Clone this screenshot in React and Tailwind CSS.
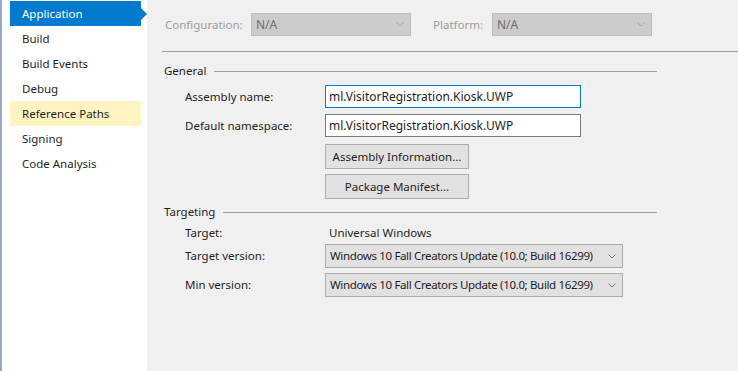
import React from 'react';

const font = { fontFamily: '"Noto Sans", "Open Sans", sans-serif' };

const navItems = ['Application', 'Build', 'Build Events', 'Debug', 'Reference Paths', 'Signing', 'Code Analysis'];

function Chevron({ color = '#8a8a8a' }) {
  return (
    <svg width="8" height="5" viewBox="0 0 8 5" className="shrink-0">
      <polyline points="0.5,0.5 4,4 7.5,0.5" fill="none" stroke={color} strokeWidth="1" />
    </svg>
  );
}

function Combo({ value, disabled, className }) {
  return (
    <div
      className={`flex items-center justify-between pl-[4px] pr-[6px] border whitespace-nowrap ${
        disabled ? 'bg-[#cccccc] border-[#bfbfbf] text-[#6d6d6d] text-[12px]' : 'bg-[#e1e1e1] border-[#adadad] text-[#1e1e1e]'
      } ${className}`}
    >
      <span className={disabled ? '' : 'tracking-[-0.35px]'}>{value}</span>
      <Chevron color={disabled ? '#a8a8a8' : '#7a7a7a'} />
    </div>
  );
}

function Section({ title, className }) {
  return (
    <div className={`flex items-center h-[14px] pl-[17px] pr-[81px] ${className}`}>
      <span className="text-[#1e1e1e]">{title}</span>
      <div className="flex-1 h-px bg-[#a0a0a0] ml-[8px]" />
    </div>
  );
}

export default function App() {
  return (
    <div className="flex w-[738px] h-[371px] text-[11.5px] overflow-hidden" style={font}>
      <div className="w-[2px] bg-[#98a8cf]" />
      <div className="w-[145px] bg-white pt-[1px] pl-[8px]">
        {navItems.map((item, i) => (
          <div
            key={item}
            className={`relative flex items-center h-[25px] w-[131px] pl-[12px] ${
              i === 0 ? 'bg-[#007acc] text-white' : i === 4 ? 'bg-[#fff4c1] text-[#1e1e1e]' : 'text-[#1e1e1e]'
            }`}
          >
            {item}
            {i === 0 && (
              <div className="absolute left-[131px] top-[7px] w-0 h-0 border-y-[6px] border-y-transparent border-l-[6px] border-l-[#007acc]" />
            )}
          </div>
        ))}
      </div>
      <div className="flex-1 bg-[#f0f0f0] pt-[13px]">
        <div className="flex items-center h-[23px] pl-[18px] text-[#9d9d9d]">
          <span className="w-[86px]">Configuration:</span>
          <Combo value="N/A" disabled className="w-[160px] h-[23px]" />
          <span className="w-[59px] ml-[22px]">Platform:</span>
          <Combo value="N/A" disabled className="w-[160px] h-[23px]" />
        </div>
        <div className="mt-[15px] ml-[15px] h-px bg-[#a0a0a0]" />
        <Section title="General" className="mt-[12px]" />

        <div className="flex items-center mt-[7px] h-[23px] pl-[38px] text-[#1e1e1e]">
          <span className="w-[140px]">Assembly name:</span>
          <div className="w-[256px] h-[23px] bg-white border border-[#0078d7] flex items-center pl-[3px] text-[12px]">
            ml.VisitorRegistration.Kiosk.UWP
          </div>
        </div>
        <div className="flex items-center mt-[6px] h-[23px] pl-[38px] text-[#1e1e1e]">
          <span className="w-[140px]">Default namespace:</span>
          <div className="w-[256px] h-[23px] bg-white border border-[#7a7a7a] flex items-center pl-[3px] text-[12px]">
            ml.VisitorRegistration.Kiosk.UWP
          </div>
        </div>
        <div className="flex flex-col ml-[178px] text-[#1e1e1e]">
          <button className="mt-[7px] w-[144px] h-[25px] bg-[#e1e1e1] border border-[#adadad]">
            Assembly Information...
          </button>
          <button className="mt-[5px] w-[144px] h-[25px] bg-[#e1e1e1] border border-[#adadad]">
            Package Manifest...
          </button>
        </div>

        <Section title="Targeting" className="mt-[6px]" />

        <div className="flex items-center mt-[6px] h-[16px] pl-[38px] text-[#1e1e1e]">
          <span className="w-[144px]">Target:</span>
          <span>Universal Windows</span>
        </div>
        <div className="flex items-center mt-[3px] h-[24px] pl-[38px] text-[#1e1e1e]">
          <span className="w-[140px]">Target version:</span>
          <Combo value="Windows 10 Fall Creators Update (10.0; Build 16299)" className="w-[298px] h-[24px]" />
        </div>
        <div className="flex items-center mt-[5px] h-[24px] pl-[38px] text-[#1e1e1e]">
          <span className="w-[140px]">Min version:</span>
          <Combo value="Windows 10 Fall Creators Update (10.0; Build 16299)" className="w-[298px] h-[24px]" />
        </div>
      </div>
    </div>
  );
}
